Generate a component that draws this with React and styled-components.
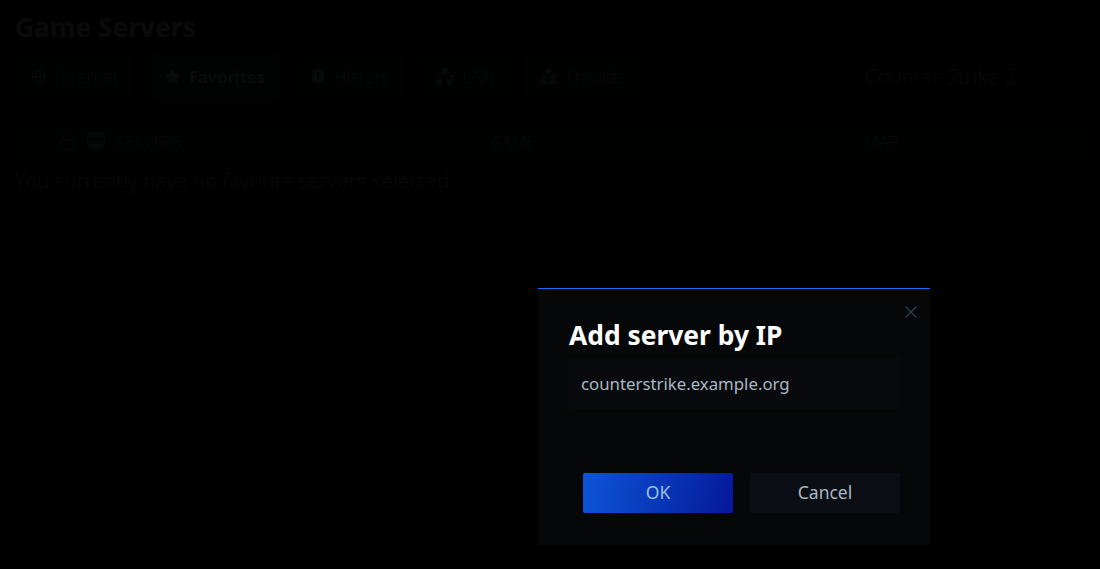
import React from "react";
import styled, { createGlobalStyle } from "styled-components";
import { Globe, X } from "lucide-react";
import { FaStar, FaClock } from "react-icons/fa";

const Global = createGlobalStyle`
  html, body { margin: 0; height: 100%; background: #000; overflow: hidden; }
  body { font-family: "Noto Sans", "Open Sans", sans-serif; }
  * { box-sizing: border-box; }
`;

const Page = styled.div`
  height: 569px;
  padding: 9px 15px 0;
  color: #c8d6e0;
  background: #0e141b;
`;

const Title = styled.h1`
  margin: 0;
  height: 36px;
  font-size: 26.3px;
  line-height: 36px;
  font-weight: 700;
  color: #fff;
`;

const TabBar = styled.div`
  display: flex;
  align-items: stretch;
  margin-top: 7px;
  height: 48px;
`;

const Tab = styled.div`
  display: flex;
  align-items: center;
  gap: 9px;
  padding: 0 15px 0 16px;
  margin-right: 15px;
  font-size: ${(p) => (p.$active ? "16.4px" : "17.4px")};
  font-weight: ${(p) => (p.$active ? 700 : 300)};
  color: ${(p) => (p.$active ? "#fff" : "#b8c6d0")};
  background: ${(p) => (p.$active ? "#1f5443" : "#0f3024")};
  border-radius: 3px;
`;

const GameName = styled.div`
  margin-left: auto;
  margin-right: 69px;
  align-self: center;
  font-size: 20.4px;
  font-weight: 300;
  color: #b8c6d0;
`;

const TableHead = styled.div`
  display: grid;
  grid-template-columns: 475px 374px 1fr;
  align-items: center;
  height: 34px;
  margin-top: 24px;
  font-size: 16.5px;
  font-weight: 300;
  color: #a8b6c0;
  background: #0f3019;
`;

const HeadCell = styled.div`
  display: flex;
  align-items: center;
  gap: 10px;
  padding-left: ${(p) => p.$pad || 0}px;
`;

const EmptyNote = styled.p`
  margin: 10px 0 0;
  font-size: 20.6px;
  font-weight: 300;
  line-height: 24px;
  color: #b8c6d0;
`;

const Backdrop = styled.div`
  position: fixed;
  inset: 0;
  background: rgba(0, 0, 0, 0.96);
`;

const Dialog = styled.div`
  position: absolute;
  left: 538px;
  top: 288px;
  width: 392px;
  height: 257px;
  padding: 28px 30px 32px 30px;
  display: flex;
  flex-direction: column;
  background: #060709;
  border-top: 1px solid #0d6efd;
`;

const CloseButton = styled.div`
  position: absolute;
  top: 13px;
  right: 9px;
  display: flex;
  color: #2a3f4a;
`;

const DialogTitle = styled.h2`
  margin: 0;
  font-size: 26.4px;
  line-height: 36px;
  font-weight: 700;
  color: #fff;
  padding-left: 1px;
`;

const Field = styled.div`
  height: 51px;
  margin-top: 5px;
  padding: 0 13px;
  display: flex;
  align-items: center;
  font-size: 16.8px;
  color: #a9b8c2;
  background: #090a0d;
  border-radius: 2px;
`;

const Actions = styled.div`
  display: flex;
  justify-content: flex-end;
  gap: 17px;
  margin-top: auto;
`;

const Button = styled.div`
  width: 150px;
  height: 40px;
  padding-bottom: 2px;
  display: flex;
  align-items: center;
  justify-content: center;
  font-size: 17.5px;
  border-radius: 2px;
  color: ${(p) => (p.$primary ? "#9fc0dc" : "#a9b8c2")};
  background: ${(p) =>
    p.$primary ? "linear-gradient(100deg, #0d55d8 0%, #04199a 100%)" : "#0b0e14"};
`;

const LanIcon = () => (
  <svg width="17" height="17" viewBox="0 0 17 17" fill="currentColor">
    <rect x="5.5" y="0" width="6" height="6" />
    <rect x="0" y="11" width="6" height="6" />
    <rect x="11" y="11" width="6" height="6" />
    <rect x="0" y="7" width="3" height="3" />
    <rect x="14" y="7" width="3" height="3" />
  </svg>
);

const FriendsIcon = () => (
  <svg width="17" height="15" viewBox="0 0 17 15" fill="currentColor">
    <circle cx="8.5" cy="3" r="3" />
    <circle cx="4" cy="8" r="2.4" />
    <circle cx="13" cy="8" r="2.4" />
    <path d="M0 15c0-3 1.5-4.5 4-4.5S8 12 8 15zM9 15c0-3 1.5-4.5 4-4.5s4 1.5 4 4.5z" />
  </svg>
);

const LockIcon = () => (
  <svg width="17" height="20" viewBox="0 0 17 20" fill="none" stroke="currentColor" strokeWidth="1.5">
    <path d="M4 9V6a4.5 4.5 0 0 1 9 0v3" />
    <rect x="1.5" y="9" width="14" height="10" rx="3" />
  </svg>
);

const ShieldIcon = () => (
  <svg width="20" height="20" viewBox="0 0 20 20" fill="currentColor">
    <path d="M10 0 L19 2.5 V10 C19 15 15 18 10 20 C5 18 1 15 1 10 V2.5 Z" />
    <rect x="1" y="7" width="18" height="2" fill="#0f3019" />
  </svg>
);

export default function App() {
  return (
    <>
      <Global />
      <Page>
        <Title>Game Servers</Title>
        <TabBar>
          <Tab><Globe size={15} />Internet</Tab>
          <Tab $active><FaStar size={15} />Favorites</Tab>
          <Tab><FaClock size={14} />History</Tab>
          <Tab><LanIcon />LAN</Tab>
          <Tab><FriendsIcon />Friends</Tab>
          <GameName>Counter-Strike 2</GameName>
        </TabBar>
        <TableHead>
          <HeadCell $pad={44}>
            <LockIcon />
            <ShieldIcon />
            SERVERS
          </HeadCell>
          <HeadCell>GAME</HeadCell>
          <HeadCell>MAP</HeadCell>
        </TableHead>
        <EmptyNote>You currently have no favorite servers selected.</EmptyNote>
      </Page>
      <Backdrop>
        <Dialog>
          <CloseButton><X size={20} strokeWidth={1.6} /></CloseButton>
          <DialogTitle>Add server by IP</DialogTitle>
          <Field>counterstrike.example.org</Field>
          <Actions>
            <Button $primary>OK</Button>
            <Button>Cancel</Button>
          </Actions>
        </Dialog>
      </Backdrop>
    </>
  );
}
